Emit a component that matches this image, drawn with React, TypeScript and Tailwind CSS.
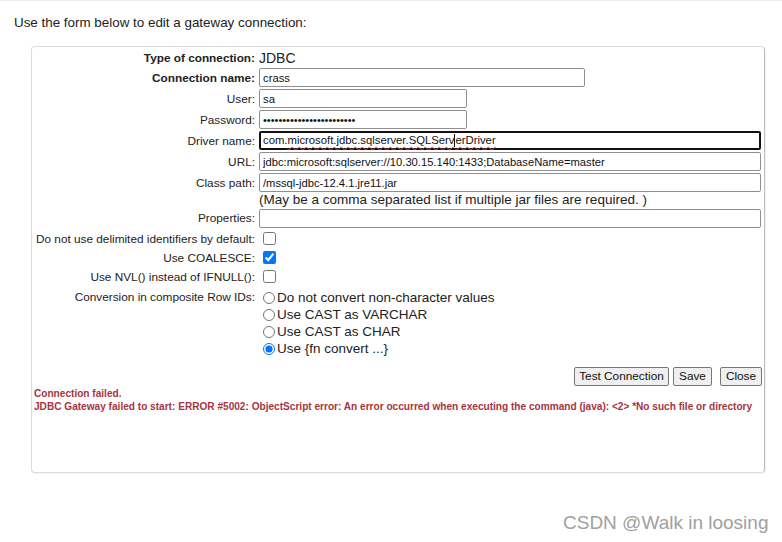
import React from "react";

const font = { fontFamily: '"Liberation Sans", Arial, sans-serif' };

function Row({ label, bold, h = "h-[21px]", children, top }: { label: string; bold?: boolean; h?: string; children?: React.ReactNode; top?: boolean }) {
  return (
    <div className={`flex ${h} ${top ? "items-start" : "items-center"}`}>
      <div className={`w-[223px] shrink-0 text-right text-[11.8px] leading-[14px] text-[#222] ${bold ? "font-bold" : ""} ${top ? "pt-[1px]" : ""}`}>{label}</div>
      <div className="ml-[4px] flex min-w-0 flex-1 items-center">{children}</div>
    </div>
  );
}

function Field({ w, value, size = "text-[11.3px]", type = "text" }: { w: string; value: string; size?: string; type?: string }) {
  return (
    <input
      readOnly
      type={type}
      value={value}
      className={`${w} h-[19px] rounded-[2px] border border-[#8f8f8f] bg-white px-[3px] ${size} leading-[17px] text-[#111] outline-none`}
      style={font}
    />
  );
}

export default function App() {
  return (
    <div className="relative h-[542px] w-[782px] overflow-hidden border-t border-[#eeeeee] bg-white text-[#222]" style={font}>
      <div className="pl-[14px] pt-[14px] text-[13.4px] leading-[16px] text-[#222]">Use the form below to edit a gateway connection:</div>
      <div className="ml-[31px] mt-[15px] h-[427px] w-[734px] rounded-[4px] border border-[#dcdcdc] border-r-[#bdbdbd] shadow-[1px_1px_1px_rgba(0,0,0,0.06)]">
        <div className="pt-[2px]">
          <Row label="Type of connection:" bold h="h-[18px]">
            <span className="text-[14px] leading-[16px]">JDBC</span>
          </Row>
          <Row label="Connection name:" bold>
            <Field w="w-[326px]" value="crass" />
          </Row>
          <Row label="User:">
            <Field w="w-[208px]" value="sa" />
          </Row>
          <Row label="Password:">
            <Field w="w-[208px]" type="password" value="abcdefghijklmnopqrstuvwx" size="text-[11px]" />
          </Row>
          <Row label="Driver name:">
            <div className="relative flex h-[19px] w-[502px] items-center rounded-[2px] border-2 border-[#111] bg-white px-[2px] text-[11.3px] leading-[15px] text-[#111]">
              <span>com.</span>
              <span className="underline decoration-[#e05050] decoration-wavy decoration-[1px] underline-offset-[2px]">microsoft.jdbc.sqlserver.SQLServ</span>
              <span className="inline-block h-[13px] w-[1px] bg-[#111]" />
              <span className="underline decoration-[#e05050] decoration-wavy decoration-[1px] underline-offset-[2px]">erDriver</span>
            </div>
          </Row>
          <Row label="URL:">
            <Field w="w-[502px]" value="jdbc:microsoft:sqlserver://10.30.15.140:1433;DatabaseName=master" size="text-[11.2px]" />
          </Row>
          <Row label="Class path:">
            <Field w="w-[502px]" value="/mssql-jdbc-12.4.1.jre11.jar" size="text-[11.2px]" />
          </Row>
          <Row label="" h="h-[14px]">
            <span className="text-[13.5px] leading-[14px] text-[#222]">(May be a comma separated list if multiple jar files are required. )</span>
          </Row>
          <Row label="Properties:" h="h-[22px]">
            <Field w="w-[502px]" value="" />
          </Row>
          <Row label="Do not use delimited identifiers by default:" h="h-[19px]">
            <input type="checkbox" readOnly className="ml-[4px] h-[13px] w-[13px]" />
          </Row>
          <Row label="Use COALESCE:" h="h-[19px]">
            <input type="checkbox" readOnly checked className="ml-[4px] h-[13px] w-[13px]" />
          </Row>
          <Row label="Use NVL() instead of IFNULL():" h="h-[19px]">
            <input type="checkbox" readOnly className="ml-[4px] h-[13px] w-[13px]" />
          </Row>
          <div className="mt-[3px]">
            <Row label="Conversion in composite Row IDs:" h="h-[68px]" top>
              <div className="flex flex-col">
                {[
                  ["Do not convert non-character values", false],
                  ["Use CAST as VARCHAR", false],
                  ["Use CAST as CHAR", false],
                  ["Use {fn convert ...}", true],
                ].map(([t, c]) => (
                  <label key={t as string} className="flex h-[17px] items-center text-[13.5px] leading-[16px] text-[#222]">
                    <input type="radio" name="conv" readOnly checked={c as boolean} className="ml-[4px] mr-[2px] h-[12px] w-[12px]" />
                    <span>{t as string}</span>
                  </label>
                ))}
              </div>
            </Row>
          </div>
          <div className="mr-[2px] mt-[10px] flex justify-end">
            <button className="h-[19px] w-[95px] rounded-[2px] border border-[#767676] bg-[#efefef] text-[11.8px] leading-[15px] text-[#111]">Test Connection</button>
            <button className="ml-[4px] h-[19px] w-[39px] rounded-[2px] border border-[#767676] bg-[#efefef] text-[11.8px] leading-[15px] text-[#111]">Save</button>
            <button className="ml-[8px] h-[19px] w-[42px] rounded-[2px] border border-[#767676] bg-[#efefef] text-[11.8px] leading-[15px] text-[#111]">Close</button>
          </div>
          <div className="ml-[2px] mt-[1px] whitespace-nowrap text-[10.1px] font-bold leading-[13px] text-[#a8343f]">
            <div>Connection failed.</div>
            <div>JDBC Gateway failed to start: ERROR #5002: ObjectScript error: An error occurred when executing the command (java): &lt;2&gt; *No such file or directory</div>
          </div>
        </div>
      </div>
      <div className="absolute left-[563px] top-[510px] text-[19px] leading-[24px] text-[#a0a0a0] [text-shadow:0_0_1px_#ffffff]">CSDN @Walk in loosing</div>
    </div>
  );
}
